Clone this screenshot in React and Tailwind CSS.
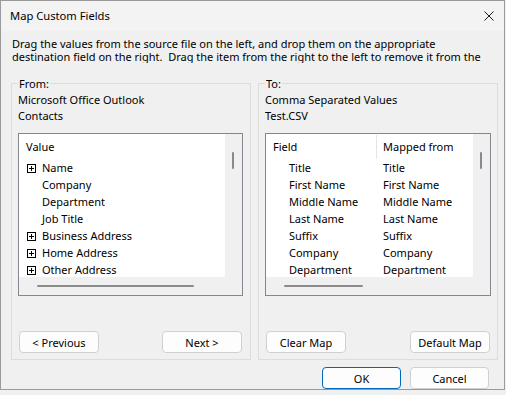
import React from "react";

function PlusBox() {
  return (
    <svg width="9" height="9" viewBox="0 0 9 9" className="shrink-0">
      <rect x="0.5" y="0.5" width="8" height="8" fill="white" stroke="#000" strokeWidth="1" />
      <path d="M2 4.5H7M4.5 2V7" stroke="#000" strokeWidth="1" />
    </svg>
  );
}

function Btn({ children, primary, className = "" }) {
  return (
    <button
      className={
        "h-[22px] rounded-[4px] bg-[#fdfdfd] text-[11px] leading-none text-black flex items-center justify-center border " +
        (primary ? "border-[#0067c0] " : "border-[#d0d0d0] ") +
        className
      }
    >
      {children}
    </button>
  );
}

function VScroll() {
  return (
    <div className="w-[17px] shrink-0 bg-[#f0f0f0] pt-[18px]">
      <div className="ml-[7px] w-[2px] h-[17px] rounded-full bg-[#8a8a8a]" />
    </div>
  );
}

function HScroll({ left, width }) {
  return (
    <div className="h-[18px] shrink-0 bg-[#f0f0f0] pt-[8px]">
      <div className="h-[2px] rounded-full bg-[#8a8a8a]" style={{ marginLeft: left, width }} />
    </div>
  );
}

const leftItems = [
  { t: "Name", plus: true },
  { t: "Company" },
  { t: "Department" },
  { t: "Job Title" },
  { t: "Business Address", plus: true },
  { t: "Home Address", plus: true },
  { t: "Other Address", plus: true },
];

const rightItems = ["Title", "First Name", "Middle Name", "Last Name", "Suffix", "Company", "Department"];

export default function App() {
  return (
    <div className="w-[506px] h-[395px] bg-[#f0f0f0] text-[11px] text-black font-['Noto_Sans',sans-serif] overflow-hidden">
      <div className="w-[505px] h-[390px] border border-[#9a9a9a] flex flex-col">
        {/* Title bar */}
        <div className="h-[30px] shrink-0 bg-[#f3f3f3] flex items-center justify-between pl-[9px] pr-[10px]">
          <span className="leading-none text-[11.2px]">Map Custom Fields</span>
          <svg width="10" height="10" viewBox="0 0 10 10">
            <path d="M0.5 0.5L9.5 9.5M9.5 0.5L0.5 9.5" stroke="#1a1a1a" strokeWidth="1" />
          </svg>
        </div>

        {/* Body */}
        <div className="flex-1 bg-[#f0f0f0] flex flex-col">
          <div className="ml-[11px] mt-[6px] h-[26px] w-[485px] leading-[13px] text-[11px] overflow-hidden">
            <div className="whitespace-nowrap">
              Drag the values from the source file on the left, and drop them on the appropriate
            </div>
            <div className="whitespace-nowrap">
              destination field on the right.&nbsp; Drag the item from the right to the left to remove it from the
            </div>
          </div>

          <div className="flex gap-[7px] ml-[10px] mt-[14px]">
            {/* From */}
            <fieldset className="w-[240px] h-[283px] border border-[#dcdcdc] pl-[6px] pr-[7px] pt-[2px]">
              <legend className="px-[1px] leading-[13px]">From:</legend>
              <div className="leading-[16px]">Microsoft Office Outlook</div>
              <div className="leading-[16px]">Contacts</div>
              <div className="mt-[9px] w-[225px] h-[163px] border border-[#828790] flex flex-col">
                <div className="flex flex-1 min-h-0">
                  <div className="flex-1 bg-white overflow-hidden">
                    <div className="h-[26px] flex items-center pl-[7px]">Value</div>
                    {leftItems.map((it) => (
                      <div key={it.t} className="h-[17px] flex items-center pl-[8px] whitespace-nowrap">
                        <div className="w-[15px] shrink-0 flex items-center">{it.plus ? <PlusBox /> : null}</div>
                        <span>{it.t}</span>
                      </div>
                    ))}
                  </div>
                  <VScroll />
                </div>
                <HScroll left={18} width={157} />
              </div>
              <div className="mt-[35px] flex justify-between px-[1px] w-[225px]">
                <Btn className="w-[80px]">&lt; Previous</Btn>
                <Btn className="w-[80px]">Next &gt;</Btn>
              </div>
            </fieldset>

            {/* To */}
            <fieldset className="w-[240px] h-[283px] border border-[#dcdcdc] pl-[6px] pr-[6px] pt-[2px]">
              <legend className="px-[1px] leading-[13px]">To:</legend>
              <div className="leading-[16px]">Comma Separated Values</div>
              <div className="leading-[16px]">Test.CSV</div>
              <div className="mt-[9px] w-[226px] h-[163px] border border-[#828790] flex flex-col">
                <div className="flex flex-1 min-h-0">
                  <div className="flex-1 bg-white overflow-hidden">
                    <div className="h-[26px] flex items-stretch pt-[1px] pb-[1px]">
                      <div className="w-[110px] pl-[7px] flex items-center">Field</div>
                      <div className="border-l border-[#e5e5e5] pl-[6px] flex items-center whitespace-nowrap">Mapped from</div>
                    </div>
                    {rightItems.map((t) => (
                      <div key={t} className="h-[17px] grid grid-cols-[117px_1fr] items-center whitespace-nowrap">
                        <span className="pl-[23px]">{t}</span>
                        <span>{t}</span>
                      </div>
                    ))}
                  </div>
                  <VScroll />
                </div>
                <HScroll left={18} width={79} />
              </div>
              <div className="mt-[35px] flex justify-between px-[1px] w-[226px]">
                <Btn className="w-[80px]">Clear Map</Btn>
                <Btn className="w-[80px]">Default Map</Btn>
              </div>
            </fieldset>
          </div>

          <div className="mt-[7px] flex justify-end gap-[9px] mr-[15px]">
            <Btn primary className="w-[79px]">OK</Btn>
            <Btn className="w-[79px]">Cancel</Btn>
          </div>
        </div>
      </div>
    </div>
  );
}
